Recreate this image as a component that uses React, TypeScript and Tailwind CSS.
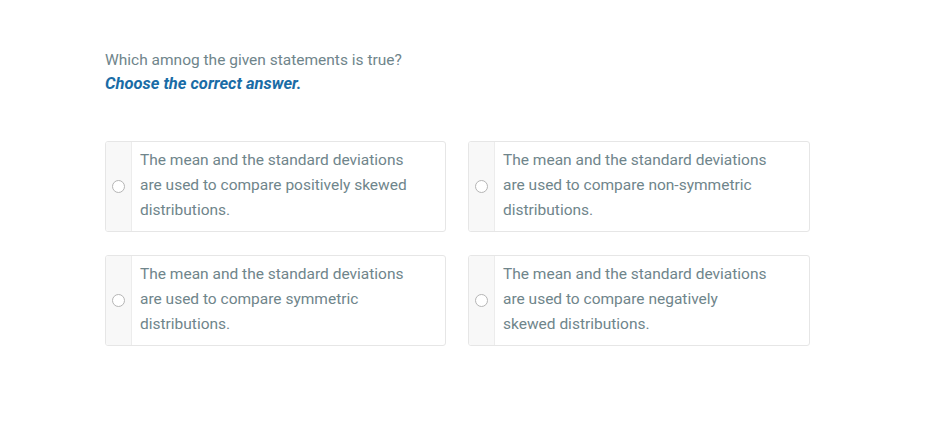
import React from 'react'

const options = [
  'The mean and the standard deviations are used to compare positively skewed distributions.',
  'The mean and the standard deviations are used to compare non-symmetric distributions.',
  'The mean and the standard deviations are used to compare symmetric distributions.',
  'The mean and the standard deviations are used to compare negatively skewed distributions.',
]

function Option({ text }: { text: string }) {
  return (
    <label className="flex h-[91px] rounded-[3px] border border-[#e6e6e6] bg-white overflow-hidden cursor-pointer">
      <div className="w-[26px] shrink-0 bg-[#f8f8f8] border-r border-[#ececec] flex items-center justify-center">
        <span className="block w-[13px] h-[13px] rounded-full border border-[#b5b5b5] bg-white" />
      </div>
      <div className="pl-[8px] pt-[6px] w-[276px] text-[15.5px] leading-[25px] text-[#6f858b]">
        {text}
      </div>
    </label>
  )
}

export default function App() {
  return (
    <div className="w-[928px] h-[433px] bg-white" style={{ fontFamily: 'Roboto, "Liberation Sans", sans-serif' }}>
      <div className="pl-[105px] pt-[48px]">
        <div className="text-[15.5px] leading-[24px] text-[#6f858b]">Which amnog the given statements is true?</div>
        <div className="text-[16.5px] leading-[24px] font-bold italic text-[#1a6ca6]">Choose the correct answer.</div>
        <div className="mt-[45px] grid grid-cols-[341px_342px] gap-x-[22px] gap-y-[23px]">
          {options.map((o, i) => (
            <Option key={i} text={o} />
          ))}
        </div>
      </div>
    </div>
  )
}
